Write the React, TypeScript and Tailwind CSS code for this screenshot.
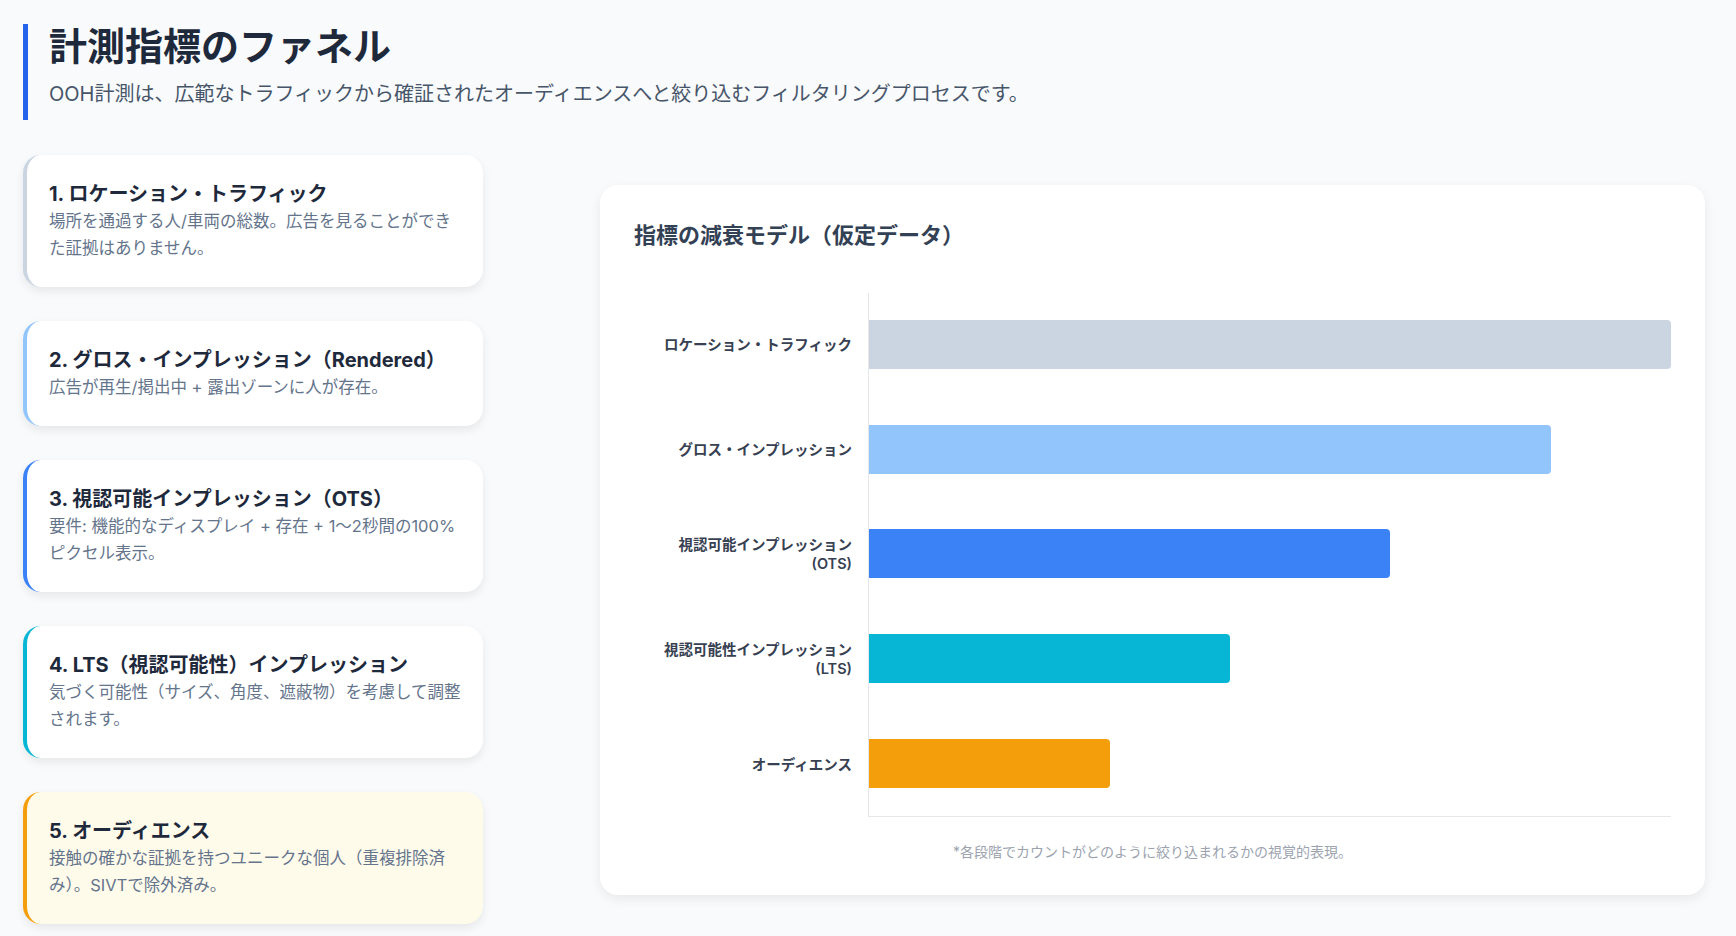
import React from "react";

const cards = [
  { t: "1. ロケーション・トラフィック", d: "場所を通過する人/車両の総数。広告を見ることができた証拠はありません。", b: "border-[#cbd5e1]", bg: "bg-white", h: "h-[132px]" },
  { t: "2. グロス・インプレッション（Rendered）", d: "広告が再生/掲出中 + 露出ゾーンに人が存在。", b: "border-[#93c5fd]", bg: "bg-white", h: "h-[105px]" },
  { t: "3. 視認可能インプレッション（OTS）", d: "要件: 機能的なディスプレイ + 存在 + 1〜2秒間の100%ピクセル表示。", b: "border-[#3b82f6]", bg: "bg-white", h: "h-[132px]" },
  { t: "4. LTS（視認可能性）インプレッション", d: "気づく可能性（サイズ、角度、遮蔽物）を考慮して調整されます。", b: "border-[#06b6d4]", bg: "bg-white", h: "h-[132px]" },
  { t: "5. オーディエンス", d: "接触の確かな証拠を持つユニークな個人（重複排除済み）。SIVTで除外済み。", b: "border-[#f59e0b]", bg: "bg-[#fffbeb]", h: "h-[132px]" },
];

const bars = [
  { l: ["ロケーション・トラフィック"], w: 100, c: "#cbd5e1" },
  { l: ["グロス・インプレッション"], w: 85, c: "#93c5fd" },
  { l: ["視認可能インプレッション", "(OTS)"], w: 65, c: "#3b82f6" },
  { l: ["視認可能性インプレッション", "(LTS)"], w: 45, c: "#06b6d4" },
  { l: ["オーディエンス"], w: 30, c: "#f59e0b" },
];

export default function App() {
  return (
    <div
      className="w-[1736px] h-[936px] bg-[#f8fafc] overflow-hidden pl-[23px] pt-[24px]"
      style={{ fontFamily: 'Inter, "Noto Sans CJK JP", sans-serif' }}
    >
      <div className="border-l-[5px] border-[#2563eb] pl-[21px] h-[96px]">
        <h1 className="text-[38px] leading-[40px] font-bold text-[#1e293b] pt-[2px]">計測指標のファネル</h1>
        <p className="text-[20px] leading-[28px] text-[#475569] mt-[14px]">
          OOH計測は、広範なトラフィックから確証されたオーディエンスへと絞り込むフィルタリングプロセスです。
        </p>
      </div>
      <div className="flex items-center mt-[35px] gap-[117px]">
        <div className="w-[460px] flex flex-col gap-[34px]">
          {cards.map((c) => (
            <div
              key={c.t}
              className={`${c.h} ${c.bg} ${c.b} border-l-4 rounded-[18px] shadow-[0_4px_10px_rgba(0,0,0,0.08)] pl-[22px] pr-[20px] flex flex-col justify-center`}
            >
              <div className="text-[20px] leading-[28px] font-bold text-[#1e293b]">{c.t}</div>
              <div className="text-[16.5px] leading-[27px] text-[#64748b]">{c.d}</div>
            </div>
          ))}
        </div>
        <div className="w-[1105px] h-[710px] bg-white rounded-[18px] shadow-[0_4px_12px_rgba(0,0,0,0.07)] px-[34px] pt-[36px] flex flex-col">
          <h2 className="text-[22px] leading-[28px] font-semibold text-[#334155]">指標の減衰モデル（仮定データ）</h2>
          <div className="flex mt-[44px] h-[524px]">
            <div className="w-[218px] flex flex-col mr-[16px]">
              {bars.map((b) => (
                <div key={b.l[0]} className="flex-1 flex flex-col justify-center items-end text-[14.5px] leading-[19px] font-semibold text-[#374151]">
                  {b.l.map((x) => <span key={x}>{x}</span>)}
                </div>
              ))}
            </div>
            <div className="flex-1 flex flex-col border-l border-b border-[#e5e7eb]">
              {bars.map((b) => (
                <div key={b.l[0]} className="flex-1 flex items-center">
                  <div className="h-[49px] rounded-r-[4px]" style={{ width: `${b.w}%`, background: b.c }} />
                </div>
              ))}
            </div>
          </div>
          <p className="text-center text-[14px] text-[#9ca3af] mt-[24px]">*各段階でカウントがどのように絞り込まれるかの視覚的表現。</p>
        </div>
      </div>
    </div>
  );
}
